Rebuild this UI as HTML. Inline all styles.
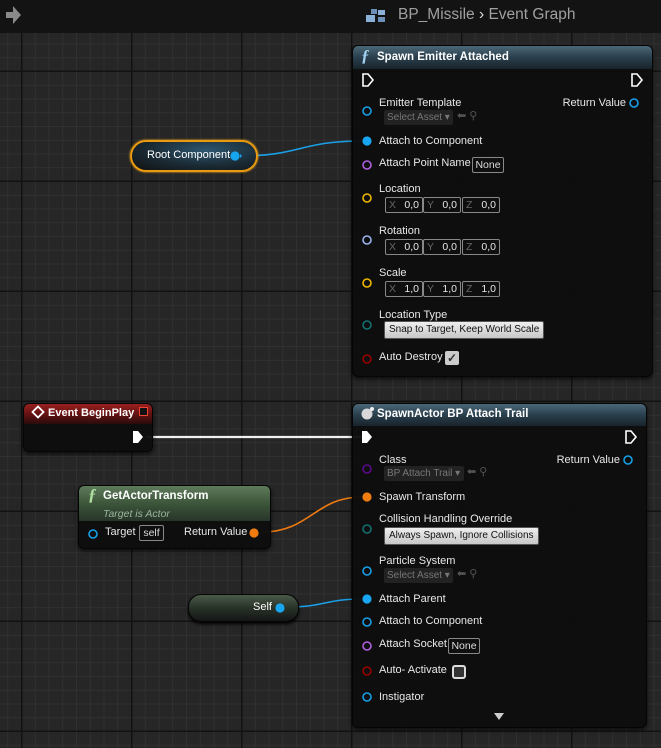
<!DOCTYPE html>
<html><head><meta charset="utf-8"><style>
*{margin:0;padding:0;box-sizing:border-box}
body{width:661px;height:748px;overflow:hidden;font-family:"Liberation Sans",sans-serif;color:#e6e6e6;font-size:11px;position:relative;
background-color:#262626;
background-image:
linear-gradient(90deg,#121212 0 1.5px,transparent 1.5px),
linear-gradient(0deg,#121212 0 1.5px,transparent 1.5px),
linear-gradient(90deg,#303030 0 1px,transparent 1px),
linear-gradient(0deg,#303030 0 1px,transparent 1px);
background-size:110px 110px,110px 110px,13.75px 13.75px,13.75px 13.75px;
background-position:21px 0,0 72px,7.25px 0,0 3.25px;}
.top{position:absolute;left:0;top:0;width:661px;height:33px;background:#131313}
.a{position:absolute;white-space:nowrap}
.node{position:absolute;background:rgba(14,14,14,.96);border-radius:6px;box-shadow:0 2px 4px rgba(0,0,0,.7);border:1px solid #050505}
.hdr{position:absolute;left:0;top:0;right:0;border-radius:5px 5px 0 0;font-weight:bold;font-size:11.5px;color:#fff;padding-left:24px}
.fn{height:23px;line-height:22px;background:linear-gradient(180deg,#4b6878 0%,#2c4250 45%,#18232b 100%)}
.lbl{position:absolute;white-space:nowrap;font-size:11px;color:#e8e8e8}
.sel{position:absolute;height:15px;background:#222;border-radius:2px;color:#777;font-size:10px;line-height:15px;padding-left:3px}
.box{position:absolute;height:16px;border:1px solid #888;border-radius:2px;background:#0f0f0f;font-size:10.5px;line-height:14px;color:#ddd}
.dd{position:absolute;height:18px;background:linear-gradient(#eee,#c8c8c8);border-radius:2px;color:#111;font-size:10px;line-height:16px;padding-left:4px;border:1px solid #555}
.xyz{position:absolute;height:16px;width:38px;border:1px solid #888;border-radius:2px;background:#0f0f0f;font-size:10.5px;line-height:14px;color:#e6e6e6}
.xyz span{color:#666;position:absolute;left:3px}
.xyz b{font-weight:normal;position:absolute;right:3px}
.f{position:absolute;font-style:italic;font-family:"Liberation Serif",serif;font-size:17px;font-weight:bold;line-height:20px}
</style></head><body>
<div class="top"></div>
<svg class="a" style="left:4px;top:4px" width="18" height="24"><path d="M2 8h7V2l8 9-8 9v-6H2z" fill="#8a8a8a"/></svg>
<svg class="a" style="left:366px;top:8px" width="22" height="16"><rect x="0" y="7" width="9" height="7" fill="#8ab0d8"/><rect x="5" y="1" width="6" height="5" fill="#6c8fb8"/><rect x="12" y="2" width="7" height="5" fill="#8ab0d8"/><rect x="12" y="9" width="7" height="5" fill="#6c8fb8"/></svg>
<div class="a" style="left:398px;top:6px;font-size:15.5px;color:#a0a0a0">BP_Missile <span style="color:#ddd">›</span> Event Graph</div>

<svg class="a" style="left:0;top:0" width="661" height="748">
<path d="M240 156 C300 156,300 141,362 141" stroke="#1aa0e8" stroke-width="1.6" fill="none"/>
<path d="M146 437 L362 437" stroke="#f0f0f0" stroke-width="2.2" fill="none"/>
<path d="M262 532 C310 532,315 497,362 497" stroke="#f07c10" stroke-width="1.6" fill="none"/>
<path d="M288 607 C325 607,325 599,362 599" stroke="#1aa0e8" stroke-width="1.6" fill="none"/>
</svg>

<!-- Root Component -->
<div class="a" style="left:130px;top:140px;width:128px;height:32px;border-radius:16px;border:2px solid #e89a10;background:radial-gradient(ellipse at 60% 30%,#2e5670 0%,#1a2a34 55%,#111 100%);box-shadow:0 0 2px #ffb020"></div>
<div class="lbl" style="left:147px;top:149px;color:#fff">Root Component</div>
<svg class="a" style="left:229px;top:150px" width="14" height="12"><circle cx="6" cy="6" r="4.6" fill="#16a6ef"/><path d="M11 4l2 2-2 2z" fill="#16a6ef"/></svg>

<!-- Spawn Emitter Attached -->
<div class="node" style="left:352px;top:45px;width:301px;height:332px">
<div class="hdr fn">Spawn Emitter Attached</div>
</div>
<div class="f" style="left:361px;top:46px;color:#9fd0f0">ƒ</div>

<!-- Event BeginPlay -->
<div class="node" style="left:23px;top:403px;width:130px;height:49px">
<div class="hdr" style="height:20px;line-height:19px;background:linear-gradient(180deg,#9a2020,#5a1010 60%,#2a0c0c);padding-left:24px;font-size:11px">Event BeginPlay</div>
</div>
<svg class="a" style="left:31px;top:405px" width="14" height="14"><path d="M7 1.5L12.5 7 7 12.5 1.5 7z" fill="none" stroke="#fff" stroke-width="1.8"/></svg>
<div class="a" style="left:139px;top:407px;width:9px;height:9px;border:1.5px solid #e43;background:#111"></div>

<!-- GetActorTransform -->
<div class="node" style="left:78px;top:485px;width:193px;height:64px">
<div class="hdr" style="height:35px;background:linear-gradient(180deg,#5d7a5a,#3a5238 55%,#27352a);padding-left:24px;line-height:18px;padding-top:1px">GetActorTransform<br><span style="font-weight:normal;font-style:italic;color:#9ab49a;font-size:10.5px">Target is Actor</span></div>
</div>
<div class="f" style="left:88px;top:485px;color:#b0e0a0">ƒ</div>
<div class="lbl" style="left:105px;top:526px">Target</div>
<div class="box" style="left:139px;top:525px;width:25px;text-align:center">self</div>
<div class="lbl" style="left:184px;top:526px">Return Value</div>

<!-- Self -->
<div class="a" style="left:188px;top:594px;width:111px;height:28px;border-radius:13px;background:linear-gradient(180deg,#4a5a48 0%,#283228 50%,#151515 100%);border:1px solid #050505;box-shadow:0 2px 3px #000"></div>
<div class="lbl" style="left:253px;top:601px;color:#fff">Self</div>

<!-- SpawnActor -->
<div class="node" style="left:352px;top:403px;width:295px;height:325px">
<div class="hdr fn" style="height:22px;line-height:20px">SpawnActor BP Attach Trail</div>
</div>
<svg class="a" style="left:360px;top:405px" width="16" height="16"><circle cx="7" cy="9" r="5.5" fill="#d8d8d8"/><circle cx="12" cy="4" r="2" fill="#eee"/></svg>

<!-- pins & exec -->
<svg class="a" style="left:0;top:0" width="661" height="748">
<g fill="none" stroke="#fff" stroke-width="1.6">
<path d="M363 74h5l5 6-5 6h-5z"/><path d="M632 74h5l5 6-5 6h-5z"/>
<path d="M626 431h5l5 6-5 6h-5z"/>
</g>
<path d="M362 431h5l5 6-5 6h-5z" fill="#fff"/>
<path d="M133 431h5l5 6-5 6h-5z" fill="#fff"/>
<g stroke-width="1.6" fill="none">
<circle cx="367" cy="111" r="4" stroke="#17a0e8"/>
<circle cx="634" cy="103" r="4" stroke="#17a0e8"/>
<circle cx="367" cy="165" r="4" stroke="#b060e0"/>
<circle cx="367" cy="198" r="4" stroke="#f0b800"/>
<circle cx="367" cy="240" r="4" stroke="#9ab4f0"/>
<circle cx="367" cy="283" r="4" stroke="#f0b800"/>
<circle cx="367" cy="325" r="4" stroke="#137070"/>
<circle cx="367" cy="359" r="4" stroke="#900"/>
<circle cx="367" cy="469" r="4" stroke="#5a0a8a"/>
<circle cx="628" cy="460" r="4" stroke="#17a0e8"/>
<circle cx="367" cy="529" r="4" stroke="#137070"/>
<circle cx="367" cy="571" r="4" stroke="#17a0e8"/>
<circle cx="367" cy="622" r="4" stroke="#17a0e8"/>
<circle cx="367" cy="646" r="4" stroke="#b060e0"/>
<circle cx="367" cy="671" r="4" stroke="#900"/>
<circle cx="367" cy="697" r="4" stroke="#17a0e8"/>
<circle cx="93" cy="534" r="4" stroke="#17a0e8"/>
</g>
<circle cx="367" cy="141" r="4.6" fill="#17a6ef"/>
<circle cx="367" cy="497" r="4.6" fill="#f07c10"/>
<circle cx="367" cy="599" r="4.6" fill="#17a6ef"/>
<circle cx="254" cy="533" r="4.6" fill="#f07c10"/>
<circle cx="280" cy="608" r="4.6" fill="#17a6ef"/>
<path d="M494 713h10l-5 7z" fill="#ccc"/>
</svg>

<!-- node 1 labels -->
<div class="lbl" style="left:379px;top:97px">Emitter Template</div>
<div class="sel" style="left:384px;top:110px;width:69px">Select Asset ▾</div>
<div class="a" style="left:457px;top:109px;color:#555;font-size:11px">⬅ ⚲</div>
<div class="lbl" style="right:35px;top:97px">Return Value</div>
<div class="lbl" style="left:379px;top:135px">Attach to Component</div>
<div class="lbl" style="left:379px;top:157px">Attach Point Name</div>
<div class="box" style="left:472px;top:157px;width:32px;text-align:center">None</div>
<div class="lbl" style="left:379px;top:183px">Location</div>
<div class="xyz" style="left:385px;top:197px"><span>X</span><b>0,0</b></div>
<div class="xyz" style="left:423px;top:197px"><span>Y</span><b>0,0</b></div>
<div class="xyz" style="left:462px;top:197px"><span>Z</span><b>0,0</b></div>
<div class="lbl" style="left:379px;top:225px">Rotation</div>
<div class="xyz" style="left:385px;top:239px"><span>X</span><b>0,0</b></div>
<div class="xyz" style="left:423px;top:239px"><span>Y</span><b>0,0</b></div>
<div class="xyz" style="left:462px;top:239px"><span>Z</span><b>0,0</b></div>
<div class="lbl" style="left:379px;top:267px">Scale</div>
<div class="xyz" style="left:385px;top:281px"><span>X</span><b>1,0</b></div>
<div class="xyz" style="left:423px;top:281px"><span>Y</span><b>1,0</b></div>
<div class="xyz" style="left:462px;top:281px"><span>Z</span><b>1,0</b></div>
<div class="lbl" style="left:379px;top:309px">Location Type</div>
<div class="dd" style="left:384px;top:321px;width:160px">Snap to Target, Keep World Scale ▾</div>
<div class="lbl" style="left:379px;top:351px">Auto Destroy</div>
<div class="a" style="left:445px;top:351px;width:14px;height:14px;border-radius:2px;background:#ccc;color:#333;font-size:12px;line-height:14px;text-align:center;font-weight:bold">✓</div>

<!-- node 2 labels -->
<div class="lbl" style="left:379px;top:454px">Class</div>
<div class="sel" style="left:384px;top:466px;width:80px">BP Attach Trail ▾</div>
<div class="a" style="left:467px;top:465px;color:#555;font-size:11px">⬅ ⚲</div>
<div class="lbl" style="right:41px;top:454px">Return Value</div>
<div class="lbl" style="left:379px;top:491px">Spawn Transform</div>
<div class="lbl" style="left:379px;top:513px">Collision Handling Override</div>
<div class="dd" style="left:384px;top:527px;width:155px">Always Spawn, Ignore Collisions ▾</div>
<div class="lbl" style="left:379px;top:555px">Particle System</div>
<div class="sel" style="left:384px;top:568px;width:69px">Select Asset ▾</div>
<div class="a" style="left:457px;top:567px;color:#555;font-size:11px">⬅ ⚲</div>
<div class="lbl" style="left:379px;top:593px">Attach Parent</div>
<div class="lbl" style="left:379px;top:615px">Attach to Component</div>
<div class="lbl" style="left:379px;top:638px">Attach Socket</div>
<div class="box" style="left:448px;top:638px;width:32px;text-align:center">None</div>
<div class="lbl" style="left:379px;top:664px">Auto- Activate</div>
<div class="a" style="left:452px;top:665px;width:14px;height:14px;border-radius:3px;border:2px solid #ddd;background:#333"></div>
<div class="lbl" style="left:379px;top:691px">Instigator</div>
</body></html>
